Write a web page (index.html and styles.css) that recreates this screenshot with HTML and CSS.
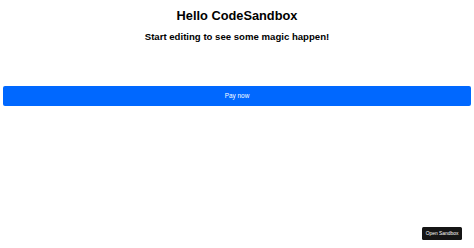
FILE: index.html
```html
<!DOCTYPE html>
<html lang="en">
<head>
<meta charset="utf-8">
<title>Hello CodeSandbox</title>
<link rel="stylesheet" href="styles.css">
</head>
<body>
  <div class="app">
    <h1 class="title">Hello CodeSandbox</h1>
    <h2 class="subtitle">Start editing to see some magic happen!</h2>
    <form class="checkout">
      <div class="payment-element"></div>
      <button type="button" class="pay-button">Pay now</button>
    </form>
  </div>
  <a class="open-sandbox" href="#">Open Sandbox</a>
</body>
</html>
```

FILE: styles.css
```css
html, body {
  background: #ffffff;
}

body {
  margin: 0 3.2px 3.2px;
  font-family: "Liberation Sans", Arial, Helvetica, sans-serif;
  color: #000000;
}

.app {
  text-align: center;
}

.title {
  font-size: 12.8px;
  font-weight: bold;
  margin: 8.2px 0 8px;
  line-height: normal;
}

.subtitle {
  font-size: 9.6px;
  font-weight: bold;
  margin: 8px 0;
  line-height: normal;
}

.checkout {
  display: flex;
  flex-direction: column;
}

.payment-element {
  height: 36px;
}

.pay-button {
  display: block;
  width: 100%;
  height: 19.4px;
  padding: 0;
  border: none;
  border-radius: 2px;
  background: #0068ff;
  color: #ffffff;
  font-family: "Liberation Sans", Arial, Helvetica, sans-serif;
  font-size: 6.4px;
  cursor: pointer;
}

.open-sandbox {
  position: fixed;
  right: 12px;
  bottom: 8px;
  height: 13px;
  padding: 0 3.6px;
  display: flex;
  align-items: center;
  background: #151515;
  border-radius: 1.5px;
  color: #ffffff;
  font-family: "Liberation Sans", Arial, Helvetica, sans-serif;
  font-size: 4.9px;
  text-decoration: none;
}
```
